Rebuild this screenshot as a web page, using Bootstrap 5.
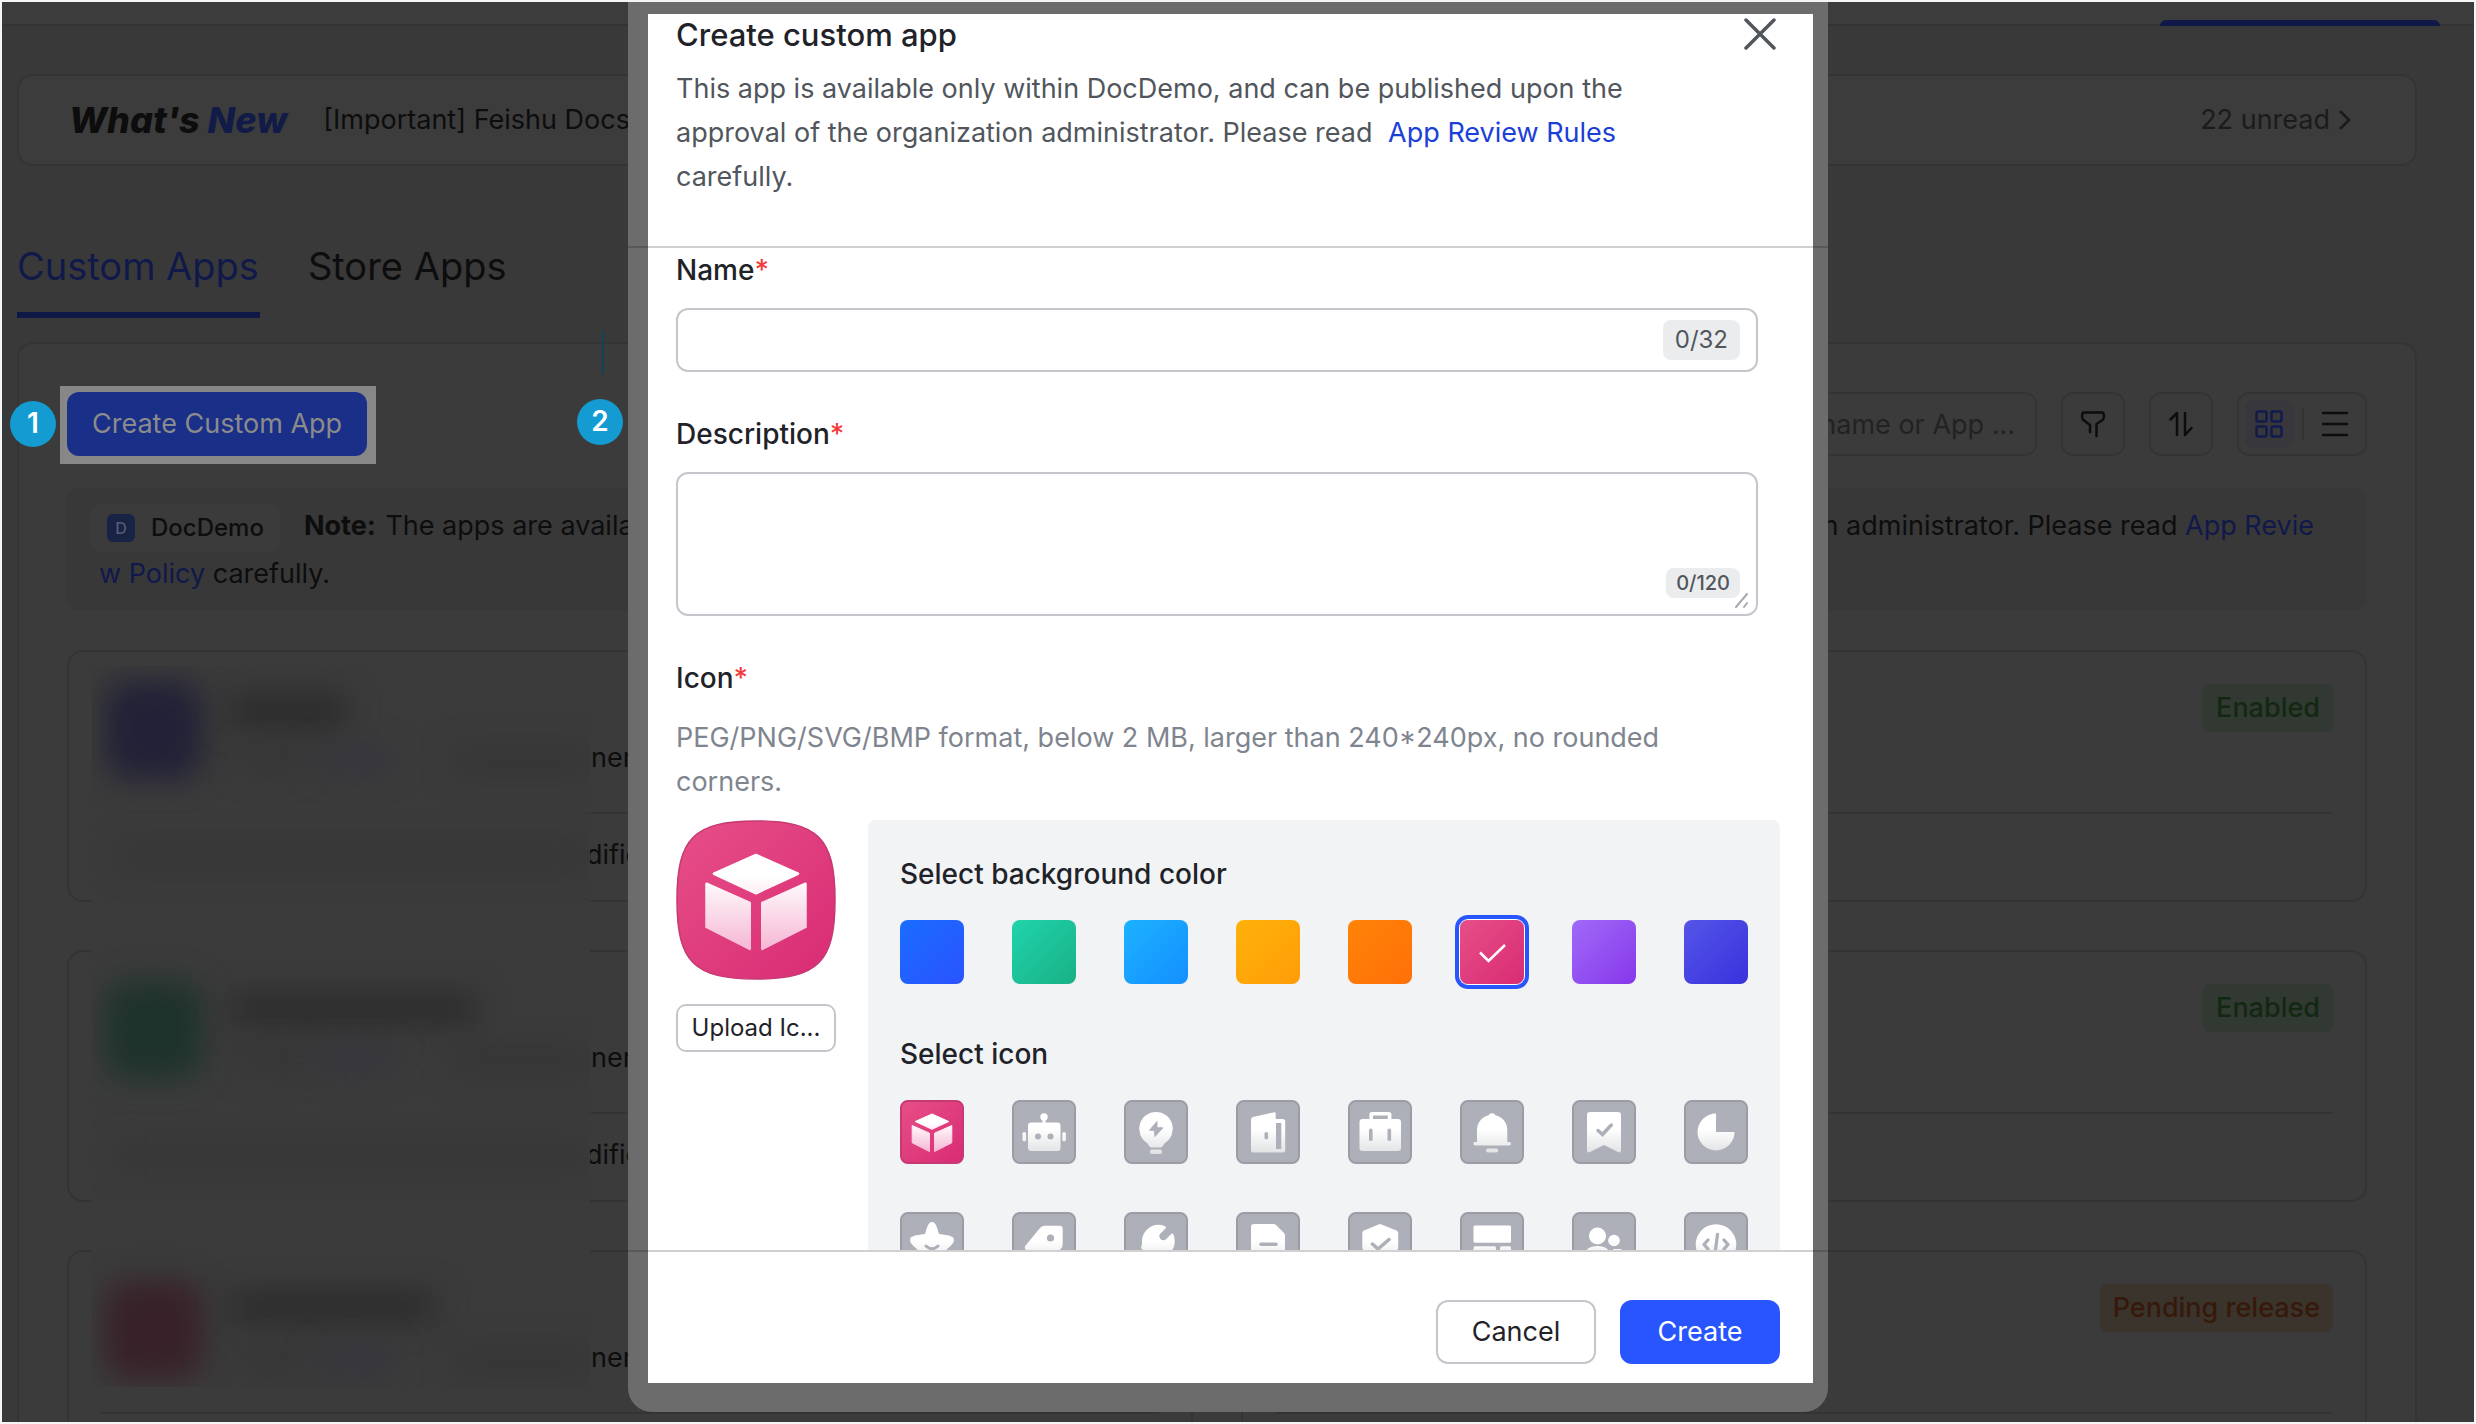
<!DOCTYPE html>
<html lang="en">
<head>
<meta charset="utf-8">
<meta name="viewport" content="width=device-width, initial-scale=1">
<title>Create custom app</title>
<link href="https://cdn.jsdelivr.net/npm/bootstrap@5.3.0/dist/css/bootstrap.min.css" rel="stylesheet">
<style>
  :root { --ink:#0d0d0d; --dim-line:#343434; --dim-blue:#10194a; --blue:#2955ff; --gray-text:#51565d; }
  body { font-family: Inter, "Liberation Sans", sans-serif; font-size: 27px; line-height: 44px; background: #f4f5f5; padding: 2px; color: #1f2329; }
  a { text-decoration: none; }
  svg { display: block; }
  .stage { height: calc(100vh - 4px); background: #393939; color: var(--ink); }
  .stage a { color: var(--dim-blue); }

  /* dimmed page behind the dialog */
  .topbar { height: 24px; background: #3c3c3c; border-bottom: 2px solid var(--dim-line); padding-right: 34px; }
  .topbar-mark { width: 280px; height: 6px; border-radius: 6px 6px 0 0; background: #0f1847; margin-bottom: -2px; }
  .page-main { padding: 48px 57px 0 15px; }
  .news { height: 92px; border: 2px solid var(--dim-line); border-radius: 16px; background: #3c3c3c; padding: 0 64px 0 50px; }
  .news-brand { font-size: 36px; font-weight: 800; font-style: italic; margin-right: 36px; }
  .news-brand span { color: #111b48; }
  .unread { color: #1b1b1b; }
  .app-tabs { gap: 48px; margin: 72px 0 24px; }
  .app-tabs a { font-size: 38px; line-height: 56px; padding-bottom: 24px; color: var(--ink); }
  .app-tabs a.active { color: var(--dim-blue); padding: 0 1px 18px 0; border-bottom: 6px solid #0f1847; }
  .panel { border: 2px solid var(--dim-line); border-radius: 16px; background: #3b3b3b; padding: 48px; }
  .tool-btn { height: 64px; width: 64px; border: 2px solid var(--dim-line); border-radius: 12px; background: none; padding: 0; color: var(--ink); }
  .tool-search { width: 420px; height: 64px; border: 2px solid var(--dim-line); border-radius: 12px; background: transparent; padding: 0 20px; text-align: right; }
  .tool-search::placeholder { color: #222; opacity: 1; }
  .view-group { width: 130px; height: 64px; border: 2px solid var(--dim-line); border-radius: 12px; padding: 0 16px 0 6px; }
  .view-on { width: 48px; height: 48px; border: 0; border-radius: 8px; background: #38383c; color: #111b4e; padding: 0; }
  .view-off { border: 0; background: none; padding: 0; color: var(--ink); }
  .view-sep { width: 2px; height: 32px; background: var(--dim-line); }
  .create-wrap { position: relative; }
  .create-wrap::before { content: ""; position: absolute; inset: -6px -9px -8px -7px; background: #878787; }
  .btn-create-dim { position: relative; height: 64px; padding: 0 25px; border: 0; border-radius: 12px; background: #1a2f87; color: #8b8b8b; }
  .step { position: absolute; width: 46px; height: 46px; border-radius: 50%; background: #139bd2; color: #fff; font-size: 28px; font-weight: 600; line-height: 44px; text-align: center; }
  .step-1 { left: -57px; top: 9px; }
  .step-2 { left: 575px; top: 397px; }
  .step-line { position: absolute; left: 600px; top: 329px; width: 2px; height: 43px; background: #0f4357; }
  .notice { margin-top: 32px; border-radius: 12px; background: #383838; padding: 16px 53px 14px 24px; }
  .org-chip { height: 48px; border-radius: 10px; background: #3b3b3b; padding: 0 16px; gap: 16px; font-size: 24px; font-weight: 500; margin-right: 24px; }
  .org-logo { width: 28px; height: 28px; border-radius: 6px; background: #182345; color: #555c70; font-size: 16px; line-height: 28px; text-align: center; }
  .notice b { margin-right: 2px; }
  .app-grid { margin-top: 40px; display: grid; grid-template-columns: 1fr 1fr; gap: 48px; position: relative; }
  .app-card { height: 252px; border: 2px solid var(--dim-line); border-radius: 16px; padding: 32px; }
  .app-top { height: 128px; border-bottom: 2px solid var(--dim-line); box-sizing: content-box; }
  .app-owner { padding: 52px 0 0 490px; }
  .app-foot { padding: 19px 0 0 485px; }
  .tag { height: 48px; border-radius: 8px; padding: 0 13px; font-weight: 500; line-height: 48px; }
  .tag-on { background: #323832; color: #122812; }
  .tag-wait { background: #3b342d; color: #36190a; }
  .smudge { position: absolute; left: 25px; top: 16px; width: 498px; height: 721px; background: #3b3b3b; }

  /* dialog */
  .veil { position: absolute; inset: 0; padding: 0 20px 10px 0; }
  .dialog { width: 1200px; border: solid #6c6c6c; border-width: 12px 15px 29px 20px; border-radius: 0 0 24px 24px; background: #fff; color: #1f2329; }
  .dialog-head { height: 232px; padding: 0 36px 0 28px; flex: none; }
  .dialog-title { font-size: 31px; line-height: 42px; font-weight: 500; margin: 0 0 11px; }
  .rule { position: relative; height: 2px; flex: none; }
  .rule::before { content: ""; position: absolute; inset: 0 -15px 0 -20px; background: rgba(0,0,0,.18); }
  .close-x { border: 0; background: none; padding: 0; color: var(--gray-text); }
  .lede { color: var(--gray-text); max-width: 1020px; margin: 0; }
  .lede a { color: #1b40d8; margin-left: 8px; }
  .dialog-body { padding: 0 33px 0 28px; min-height: 0; }
  .field { margin: 0 22px 40px 0; }
  .field-label { display: block; font-size: 28px; font-weight: 500; margin: 0 0 16px; }
  .req { color: #f23c3c; }
  .field .form-control { height: 64px; border: 2px solid #c3c7cc; border-radius: 12px; font-size: 27px; resize: none; }
  .field textarea.form-control { height: 144px; display: block; }
  .counter { position: absolute; right: 18px; top: 12px; height: 40px; line-height: 40px; padding: 0 12px; border-radius: 8px; background: #ebecee; color: var(--gray-text); font-size: 24px; }
  .counter-sm { top: 96px; height: 30px; line-height: 30px; padding: 0 10px; font-size: 20px; font-weight: 500; }
  .grip { position: absolute; right: 9px; bottom: 8px; }
  .hint { color: #7f858f; max-width: 1040px; margin: 0 0 16px; }
  .picker { background: #f2f3f5; border-radius: 8px; padding: 32px; }
  .picker h3 { font-size: 28px; line-height: 44px; font-weight: 500; margin: 0 0 24px; }
  .choices { gap: 48px; margin-bottom: 48px; }
  .choices label { width: 64px; height: 64px; border-radius: 8px; display: block; }
  .glyph { background: #adb0b8; border: 2px solid #9a9da3; color: #adb0b8; }
  .glyph svg { margin: -2px; }
  .glyph.picked { background: linear-gradient(135deg, #e64f87, #d92b74); border-color: #c63a73; }
  .sw-1 { background: linear-gradient(135deg, #1a6cff, #2a54ff); }
  .sw-2 { background: linear-gradient(135deg, #20d4ac, #19b085); }
  .sw-3 { background: linear-gradient(135deg, #1cb2ff, #148fff); }
  .sw-4 { background: linear-gradient(135deg, #ffb20a, #ff9c08); }
  .sw-5 { background: linear-gradient(135deg, #ff8309, #ff7007); }
  .sw-6 { background: linear-gradient(135deg, #e64f87, #d92b74); box-shadow: 0 0 0 1px #fff, 0 0 0 5px var(--blue); }
  .sw-7 { background: linear-gradient(135deg, #a06af8, #8637ea); }
  .sw-8 { background: linear-gradient(135deg, #5555e8, #3732dc); }
  .upload { width: 160px; height: 48px; border: 2px solid #c3c7cc; border-radius: 10px; background: #fff; color: #1f2329; font-size: 24px; line-height: 40px; padding: 0; }
  .dialog-foot { padding: 48px 33px 19px; gap: 24px; flex: none; }
  .dialog-foot .btn { width: 160px; height: 64px; border: 2px solid #c3c7cc; border-radius: 12px; font-size: 27px; line-height: 44px; color: #1f2329; padding: 0; }
  .dialog-foot .btn-primary { background: var(--blue); border-color: var(--blue); color: #fff; }
</style>
<script src="https://cdn.jsdelivr.net/npm/bootstrap@5.3.0/dist/js/bootstrap.bundle.min.js"></script>
</head>
<body>
<svg width="0" height="0" class="position-absolute" aria-hidden="true">
  <defs>
    <linearGradient id="fade" gradientUnits="userSpaceOnUse" x1="0" y1="12" x2="0" y2="54"><stop offset=".4" stop-color="#fff"/><stop offset="1" stop-color="#e0e1e3"/></linearGradient>
    <linearGradient id="fadePink" gradientUnits="userSpaceOnUse" x1="0" y1="12" x2="0" y2="54"><stop offset=".25" stop-color="#fff"/><stop offset="1" stop-color="#f5b2d0"/></linearGradient>
    <linearGradient id="pink" x1="0" y1="0" x2="1" y2="1"><stop offset="0" stop-color="#e64f87"/><stop offset="1" stop-color="#d92b74"/></linearGradient>
    <symbol id="cube" viewBox="0 0 64 64"><path fill="url(#fadePink)" stroke="url(#fadePink)" stroke-linejoin="round" d="M32 14 48.800 21.500 32 29.300 15.200 21.500zM12.200 25.500 29.500 33.200V51.600L12.200 42.800zM51.800 25.500 34.500 33.200V51.600L51.800 42.800z"/></symbol>
    <filter id="soft" filterUnits="userSpaceOnUse" x="-60" y="-60" width="620" height="840" color-interpolation-filters="sRGB"><feGaussianBlur stdDeviation="15"/></filter>
  </defs>
</svg>

<div class="stage position-relative overflow-hidden">
  <header class="topbar d-flex justify-content-end align-items-end"><div class="topbar-mark"></div></header>

  <main class="page-main">
    <section class="news d-flex align-items-center">
      <div class="news-brand text-nowrap">What's <span>New</span></div>
      <div class="text-nowrap">[Important] Feishu Docs</div>
      <div class="unread ms-auto d-flex align-items-center gap-2">22 unread
        <svg width="13" height="22" viewBox="0 0 13 22" fill="none" stroke="currentColor" stroke-width="2.500"><path d="M2 2l9 9-9 9"/></svg>
      </div>
    </section>

    <nav class="app-tabs d-flex">
      <a class="active" href="#">Custom Apps</a>
      <a href="#">Store Apps</a>
    </nav>

    <section class="panel">
      <div class="d-flex align-items-center gap-4">
        <div class="create-wrap">
          <button class="btn-create-dim" type="button">Create Custom App</button>
          <span class="step step-1">1</span>
        </div>
        <input class="tool-search ms-auto" type="text" placeholder="name or App ..." aria-label="Search by name or App ID">
        <button class="tool-btn d-flex align-items-center justify-content-center" type="button" aria-label="Filter">
          <svg width="26" height="28" viewBox="0 0 26 28" fill="none" stroke="currentColor" stroke-width="2.500" stroke-linecap="round" stroke-linejoin="round"><path d="M10 22V15L2.800 9.500C1.500 8 2 2.500 3.500 2.500h19C24 2.500 24.500 8 23.200 9.500L16.500 14v12"/></svg>
        </button>
        <button class="tool-btn d-flex align-items-center justify-content-center" type="button" aria-label="Sort">
          <svg width="26" height="28" viewBox="0 0 26 28" fill="none" stroke="currentColor" stroke-width="2.500" stroke-linecap="round" stroke-linejoin="round"><path d="M2.500 9.500 9 3v22M17 3v22l6.500-7"/></svg>
        </button>
        <div class="view-group d-flex align-items-center justify-content-between">
          <button class="view-on d-flex align-items-center justify-content-center" type="button" aria-label="Grid view">
            <svg width="28" height="28" viewBox="0 0 28 28" fill="none" stroke="currentColor" stroke-width="2.500"><rect x="1.500" y="1.500" width="10" height="10" rx="1.500"/><rect x="16.500" y="1.500" width="10" height="10" rx="1.500"/><rect x="1.500" y="16.500" width="10" height="10" rx="1.500"/><rect x="16.500" y="16.500" width="10" height="10" rx="1.500"/></svg>
          </button>
          <div class="view-sep"></div>
          <button class="view-off ms-2" type="button" aria-label="List view">
            <svg width="28" height="26" viewBox="0 0 28 26" stroke="currentColor" stroke-width="2.500" stroke-linecap="round"><path d="M2 2h24M2 13h24M2 24h24"/></svg>
          </button>
        </div>
      </div>

      <div class="notice">
        <div class="d-flex text-nowrap">
          <div class="org-chip d-flex align-items-center"><span class="org-logo">D</span>DocDemo</div>
          <div><b>Note:</b> The apps are available</div>
          <div class="ms-auto">n administrator. Please read <a href="#">App Revie</a></div>
        </div>
        <div class="ps-2"><a href="#">w Policy</a> carefully.</div>
      </div>

      <div class="app-grid">
        <article class="app-card"><div class="app-top"><div class="app-owner">ner</div></div><div class="app-foot">difie</div></article>
        <article class="app-card"><div class="app-top d-flex justify-content-end"><span class="tag tag-on">Enabled</span></div></article>
        <article class="app-card"><div class="app-top"><div class="app-owner">ner</div></div><div class="app-foot">difie</div></article>
        <article class="app-card"><div class="app-top d-flex justify-content-end"><span class="tag tag-on">Enabled</span></div></article>
        <article class="app-card"><div class="app-top"><div class="app-owner">ner</div></div><div class="app-foot"></div></article>
        <article class="app-card"><div class="app-top d-flex justify-content-end"><span class="tag tag-wait">Pending release</span></div></article>
        <div class="smudge">
          <svg width="498" height="721" viewBox="0 0 498 721">
            <g filter="url(#soft)">
              <rect x="13" y="15" width="97" height="98" rx="24" fill="#222137"/>
              <rect x="13" y="315" width="97" height="98" rx="24" fill="#1e332b"/>
              <rect x="13" y="615" width="97" height="98" rx="24" fill="#382129"/>
            </g>
            <g filter="url(#soft)" fill="#2b2b2b">
              <rect x="138" y="28" width="116" height="32"/><rect x="138" y="328" width="246" height="28"/><rect x="138" y="626" width="204" height="28"/>
            </g>
            <g filter="url(#soft)" fill="#343434">
              <rect x="148" y="84" width="60" height="20"/><rect x="360" y="84" width="138" height="22"/><rect x="24" y="180" width="474" height="20"/>
              <rect x="148" y="384" width="60" height="20"/><rect x="360" y="384" width="138" height="22"/><rect x="24" y="480" width="474" height="20"/>
              <rect x="148" y="684" width="60" height="20"/><rect x="360" y="684" width="138" height="22"/>
            </g>
            <g filter="url(#soft)" fill="#33343e"><rect x="224" y="84" width="76" height="20"/><rect x="224" y="384" width="76" height="20"/><rect x="224" y="684" width="76" height="20"/></g>
          </svg>
        </div>
      </div>
    </section>
  </main>

  <div class="step-line"></div>
  <span class="step step-2">2</span>

  <div class="veil d-flex justify-content-center">
    <form class="dialog d-flex flex-column" role="dialog" aria-labelledby="dlgTitle">
      <div class="dialog-head">
        <div class="d-flex justify-content-between align-items-start">
          <h2 class="dialog-title" id="dlgTitle">Create custom app</h2>
          <button class="close-x pt-1" type="button" aria-label="Close">
            <svg width="34" height="32" viewBox="0 0 34 32" stroke="currentColor" stroke-width="3.500" stroke-linecap="round"><path d="M3 2l28 28M31 2 3 30"/></svg>
          </button>
        </div>
        <p class="lede">This app is available only within DocDemo, and can be published upon the approval of the organization administrator. Please read <a href="#">App Review Rules</a> carefully.</p>
      </div>
      <div class="rule"></div>

      <div class="dialog-body flex-fill overflow-hidden">
        <div class="field">
          <label class="field-label" for="appName">Name<span class="req">*</span></label>
          <div class="position-relative"><input class="form-control" id="appName" type="text" maxlength="32"><span class="counter">0/32</span></div>
        </div>
        <div class="field">
          <label class="field-label" for="appDesc">Description<span class="req">*</span></label>
          <div class="position-relative"><textarea class="form-control" id="appDesc" maxlength="120"></textarea><span class="counter counter-sm">0/120</span>
            <svg class="grip" width="15" height="16" viewBox="0 0 15 16" stroke="#a5a9b0" stroke-width="2" stroke-linecap="round"><path d="M2 15 13 2M10 15l3-4"/></svg>
          </div>
        </div>
        <div class="field-label">Icon<span class="req">*</span></div>
        <p class="hint">PEG/PNG/SVG/BMP format, below 2 MB, larger than 240*240px, no rounded corners.</p>
        <div class="d-flex align-items-start">
          <div class="d-flex flex-column gap-4 me-4 pe-2">
            <svg width="160" height="160" viewBox="0 0 160 160"><path d="M1 80C1 18 18 1 80 1s79 17 79 79-17 79-79 79S1 142 1 80z" fill="url(#pink)" stroke="#c63a73" stroke-width="1.500"/><use href="#cube" width="160" height="160"/></svg>
            <button class="upload" type="button">Upload Ic...</button>
          </div>
          <div class="picker flex-fill">
            <h3>Select background color</h3>
            <div class="choices d-flex">
              <div><input class="btn-check" type="radio" name="bg" id="bg1"><label class="sw-1" for="bg1" aria-label="Blue"></label></div>
              <div><input class="btn-check" type="radio" name="bg" id="bg2"><label class="sw-2" for="bg2" aria-label="Green"></label></div>
              <div><input class="btn-check" type="radio" name="bg" id="bg3"><label class="sw-3" for="bg3" aria-label="Sky"></label></div>
              <div><input class="btn-check" type="radio" name="bg" id="bg4"><label class="sw-4" for="bg4" aria-label="Yellow"></label></div>
              <div><input class="btn-check" type="radio" name="bg" id="bg5"><label class="sw-5" for="bg5" aria-label="Orange"></label></div>
              <div><input class="btn-check" type="radio" name="bg" id="bg6" checked><label class="sw-6" for="bg6" aria-label="Pink"><svg width="64" height="64" viewBox="0 0 64 64" fill="none" stroke="#fff" stroke-width="2.500"><path d="M20 32.500 28.500 41 45 25"/></svg></label></div>
              <div><input class="btn-check" type="radio" name="bg" id="bg7"><label class="sw-7" for="bg7" aria-label="Purple"></label></div>
              <div><input class="btn-check" type="radio" name="bg" id="bg8"><label class="sw-8" for="bg8" aria-label="Indigo"></label></div>
            </div>
            <h3>Select icon</h3>
            <div class="choices d-flex">
              <div><input class="btn-check" type="radio" name="ic" id="ic1" checked><label class="glyph picked" for="ic1" aria-label="Cube"><svg width="64" height="64"><use href="#cube" width="64" height="64"/></svg></label></div>
              <div><input class="btn-check" type="radio" name="ic" id="ic2"><label class="glyph" for="ic2" aria-label="Robot"><svg width="64" height="64" fill="url(#fade)"><circle cx="32" cy="17" r="3.700"/><path d="M30.500 18h3v6h-3z"/><rect x="16" y="22.500" width="32.500" height="28.500" rx="3"/><rect x="10.500" y="32" width="3.600" height="9.500" rx="1.800"/><rect x="50.300" y="32" width="3.600" height="9.500" rx="1.800"/><g fill="#adb0b8"><circle cx="26" cy="36.500" r="3"/><circle cx="38.500" cy="36.500" r="3"/></g></svg></label></div>
              <div><input class="btn-check" type="radio" name="ic" id="ic3"><label class="glyph" for="ic3" aria-label="Idea"><svg width="64" height="64" fill="url(#fade)"><path d="M32 12a16.800 16.800 0 0 0-9 31c1.500 1 2 4.500 4.500 4.500h9c2.500 0 3-3.500 4.500-4.500a16.800 16.800 0 0 0-9-31z"/><rect x="26" y="49.500" width="12" height="4.400" rx="2"/><path fill="#adb0b8" stroke="#adb0b8" stroke-linejoin="round" d="M33 21.500 25.500 30.300H30.300L31 36.500 38.800 27.800H33z"/></svg></label></div>
              <div><input class="btn-check" type="radio" name="ic" id="ic4"><label class="glyph" for="ic4" aria-label="Door"><svg width="64" height="64" fill="url(#fade)"><path fill-rule="evenodd" d="M15 19.500q0-2 2-2.500L38.500 12.200q1.200-.2 1.200 1V19h7q2.500 0 2.500 2.500V50q0 2.500-2.500 2.500H17.500Q15 52.500 15 50zM40 23v26h5.300V23z"/><rect x="28.500" y="32" width="3.600" height="7.500" rx="1.800" fill="#adb0b8"/></svg></label></div>
              <div><input class="btn-check" type="radio" name="ic" id="ic5"><label class="glyph" for="ic5" aria-label="Briefcase"><svg width="64" height="64" fill="url(#fade)"><rect x="11.500" y="19" width="41.500" height="32" rx="3"/><path d="M23.200 20v-5.500q0-.7.700-.7h17q.7 0 .7.700V20" fill="none" stroke="#fff" stroke-width="3.600"/><g fill="#adb0b8"><rect x="21" y="28.500" width="3.600" height="12.500" rx="1.800"/><rect x="39.500" y="28.500" width="3.600" height="12.500" rx="1.800"/></g></svg></label></div>
              <div><input class="btn-check" type="radio" name="ic" id="ic6"><label class="glyph" for="ic6" aria-label="Bell"><svg width="64" height="64" fill="url(#fade)"><path d="M29 15q0-1.800 3-1.800t3 1.800C43 17 47.300 23 47.300 30v12h2q1.700.2 1.700 1.800t-1.700 1.800H15q-1.700-.2-1.700-1.800T15 42h2V30c0-7 4.300-13 12-15z"/><rect x="26" y="48.500" width="12.200" height="4" rx="2"/></svg></label></div>
              <div><input class="btn-check" type="radio" name="ic" id="ic7"><label class="glyph" for="ic7" aria-label="Bookmark"><svg width="64" height="64" fill="url(#fade)"><path d="M18 12h28q3 0 3 3v35q0 3.500-3 2L32 45 18 52q-3 1.500-3-2V15q0-3 3-3z"/><path d="M26 30.500 30.500 34.500 39.300 25" fill="none" stroke="#adb0b8" stroke-width="3.500" stroke-linecap="round"/></svg></label></div>
              <div><input class="btn-check" type="radio" name="ic" id="ic8"><label class="glyph" for="ic8" aria-label="Chart"><svg width="64" height="64" fill="url(#fade)"><path d="M32 13.500V32h18.500A18.500 18.500 0 1 1 32 13.500z"/></svg></label></div>
            </div>
            <div class="choices d-flex">
              <div><input class="btn-check" type="radio" name="ic" id="ic9"><label class="glyph" for="ic9" aria-label="Star"><svg width="64" height="64" fill="url(#fade)"><path d="M32 10c4 0 5 6 7 12 6 1 15 1 15 6 0 4-6 8-10 12 1 8 2 12-2 14-3 1-7-3-10-4-3 1-7 5-10 4-4-2-3-6-2-14-4-4-10-8-10-12 0-5 9-5 15-6 2-6 3-12 7-12z"/><path d="M26 34q6 5.500 12 0" fill="none" stroke="#adb0b8" stroke-width="3" stroke-linecap="round"/></svg></label></div>
              <div><input class="btn-check" type="radio" name="ic" id="ic10"><label class="glyph" for="ic10" aria-label="Tag"><svg width="64" height="64" fill="url(#fade)"><path d="M33 13.700h14.500q3.200 0 3.200 3V32q0 3-2 5L34 51q-3 3-6 0L14 38q-2.500-2.500 0-5L28 16q2-2.300 5-2.300z"/><circle cx="38.500" cy="26" r="3.600" fill="#adb0b8"/></svg></label></div>
              <div><input class="btn-check" type="radio" name="ic" id="ic11"><label class="glyph" for="ic11" aria-label="Wrench"><svg width="64" height="64" fill="url(#fade)"><path d="M41 14.200q1.700.8.500 2.300L36 22q-1.500 2 .2 4.700 3 3 6 .3l5-5q1.500-1.300 2.300.5c2 6 1.500 11-1 15L30 50 17 36c.5-2 1-3 1-5C17 19 29 9 41 14.200z"/></svg></label></div>
              <div><input class="btn-check" type="radio" name="ic" id="ic12"><label class="glyph" for="ic12" aria-label="Document"><svg width="64" height="64" fill="url(#fade)"><path d="M18 12h19.500q1.500 0 2.500 1l8 8q1 1 1 2.500V49q0 3-3 3H18q-3 0-3-3V15q0-3 3-3z"/><path d="M25 32.300h15" stroke="#adb0b8" stroke-width="3.500" stroke-linecap="round"/></svg></label></div>
              <div><input class="btn-check" type="radio" name="ic" id="ic13"><label class="glyph" for="ic13" aria-label="Shield"><svg width="64" height="64" fill="url(#fade)"><path d="M30.500 12.500q1.500-.8 3 0L48.500 18.500q1.700.7 1.700 2.500v13c0 9-8 14-18.200 19-10-5-17.700-10-17.700-19V21q0-1.800 1.700-2.500z"/><path d="M24.500 32 30 37 41 27.500" fill="none" stroke="#adb0b8" stroke-width="3.500" stroke-linecap="round"/></svg></label></div>
              <div><input class="btn-check" type="radio" name="ic" id="ic14"><label class="glyph" for="ic14" aria-label="Layout"><svg width="64" height="64" fill="url(#fade)"><rect x="13.500" y="13.500" width="37.500" height="17.200" rx="1.500"/><rect x="13.500" y="34.300" width="22.500" height="16" rx="1.500"/><rect x="40" y="34.300" width="11" height="16" rx="1.500"/></svg></label></div>
              <div><input class="btn-check" type="radio" name="ic" id="ic15"><label class="glyph" for="ic15" aria-label="People"><svg width="64" height="64" fill="url(#fade)"><circle cx="25.500" cy="24" r="8.500"/><circle cx="42" cy="28.500" r="5.800"/><path d="M12 46c0-8 5-12 13.500-12S39 38 39 46v3H12zM41 37h8q4 3 4 12H42q0-7-1-12z"/></svg></label></div>
              <div><input class="btn-check" type="radio" name="ic" id="ic16"><label class="glyph" for="ic16" aria-label="Code"><svg width="64" height="64" fill="url(#fade)"><circle cx="32" cy="32.500" r="20.300"/><path d="M24 28l-4 4.500 4 4.500M40 28l4 4.500-4 4.500M33.500 22.500 31 42" fill="none" stroke="#adb0b8" stroke-width="3.300" stroke-linecap="round" stroke-linejoin="round"/></svg></label></div>
            </div>
          </div>
        </div>
      </div>

      <div class="rule"></div>
      <div class="dialog-foot d-flex justify-content-end">
        <button class="btn btn-light bg-white" type="button">Cancel</button>
        <button class="btn btn-primary" type="submit">Create</button>
      </div>
    </form>
  </div>
</div>
</body>
</html>
